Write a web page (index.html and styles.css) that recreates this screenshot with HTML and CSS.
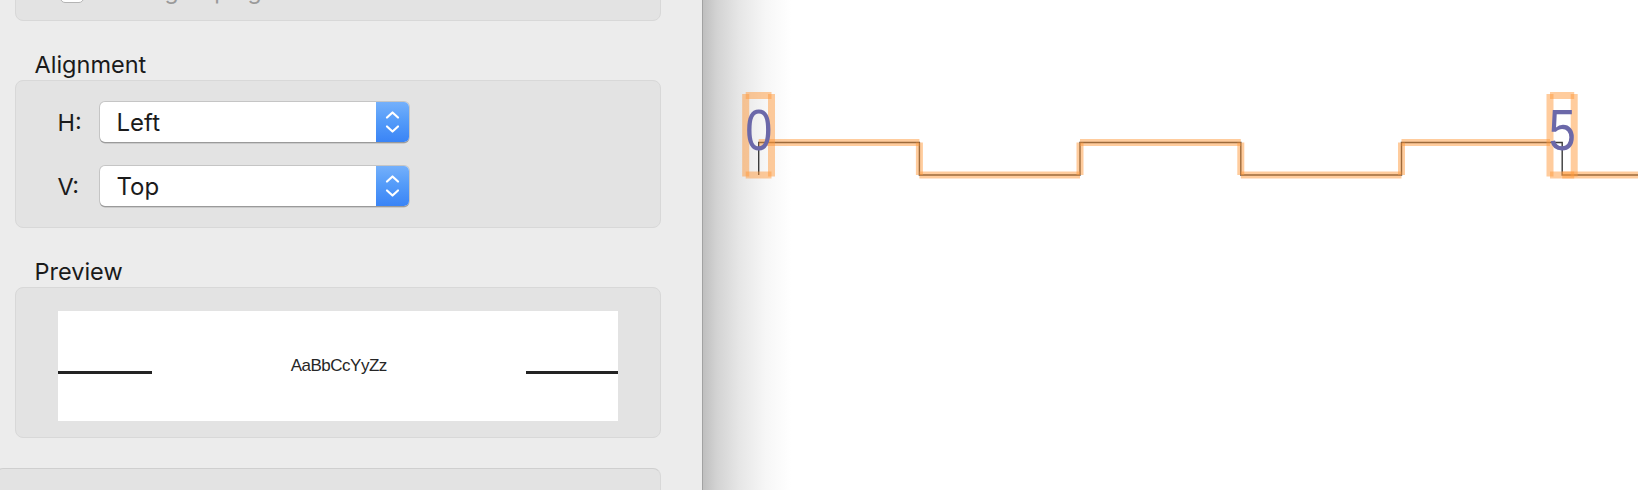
FILE: index.html
```html
<!DOCTYPE html>
<html lang="en">
<head>
<meta charset="utf-8">
<title>Alignment inspector</title>
<link rel="stylesheet" href="styles.css">
</head>
<body>
<div class="app">
  <aside class="panel">
    <section class="group group-top">
      <div class="check-row">
        <span class="checkbox"></span>
        <span class="check-label">Show grouping</span>
      </div>
    </section>

    <h3 class="group-title">Alignment</h3>
    <section class="group group-align">
      <div class="row">
        <span class="row-label">H:</span>
        <div class="popup">
          <span class="popup-text">Left</span>
          <span class="stepper">
            <svg width="33" height="40" viewBox="0 0 33 40"><path d="M11 15.5 L16.5 10.5 L22 15.5 M11 24.5 L16.5 29.5 L22 24.5" fill="none" stroke="#fff" stroke-width="2.2" stroke-linecap="round" stroke-linejoin="round"/></svg>
          </span>
        </div>
      </div>
      <div class="row">
        <span class="row-label">V:</span>
        <div class="popup">
          <span class="popup-text">Top</span>
          <span class="stepper">
            <svg width="33" height="40" viewBox="0 0 33 40"><path d="M11 15.5 L16.5 10.5 L22 15.5 M11 24.5 L16.5 29.5 L22 24.5" fill="none" stroke="#fff" stroke-width="2.2" stroke-linecap="round" stroke-linejoin="round"/></svg>
          </span>
        </div>
      </div>
    </section>

    <h3 class="group-title">Preview</h3>
    <section class="group group-preview">
      <div class="preview">
        <span class="rule rule-left"></span>
        <span class="sample">AaBbCcYyZz</span>
        <span class="rule rule-right"></span>
      </div>
    </section>

    <section class="group group-bottom"></section>
  </aside>

  <main class="canvas">
    <svg class="wave" width="935" height="490" viewBox="703 0 935 490">
      <path class="trace" d="M758.7 175 V142.5 H919.4 V175 H1080 V142.5 H1240.8 V175 H1401.5 V142.5 H1562.2 V175 H1645"/>
      <g class="hl">
        <line x1="758.7" y1="142.5" x2="919.4" y2="142.5"/>
        <line x1="919.4" y1="142.5" x2="919.4" y2="175"/>
        <line x1="919.4" y1="175" x2="1080" y2="175"/>
        <line x1="1080" y1="175" x2="1080" y2="142.5"/>
        <line x1="1080" y1="142.5" x2="1240.8" y2="142.5"/>
        <line x1="1240.8" y1="142.5" x2="1240.8" y2="175"/>
        <line x1="1240.8" y1="175" x2="1401.5" y2="175"/>
        <line x1="1401.5" y1="175" x2="1401.5" y2="142.5"/>
        <line x1="1401.5" y1="142.5" x2="1550" y2="142.5"/>
        <line x1="1562.2" y1="175" x2="1645" y2="175"/>

        <line x1="745.7" y1="95.5" x2="771.5" y2="95.5"/>
        <line x1="745.7" y1="175" x2="771.5" y2="175"/>
        <line x1="745.7" y1="94" x2="745.7" y2="176.5"/>
        <line x1="771.5" y1="94" x2="771.5" y2="176.5"/>

        <line x1="1550" y1="95.5" x2="1574.2" y2="95.5"/>
        <line x1="1550" y1="175" x2="1574.2" y2="175"/>
        <line x1="1550" y1="94" x2="1550" y2="176.5"/>
        <line x1="1574.2" y1="94" x2="1574.2" y2="176.5"/>
      </g>
      <text class="digit" transform="translate(758.7 150) scale(0.84 1)">0</text>
      <text class="digit" transform="translate(1562.2 150) scale(0.84 1)">5</text>
    </svg>
  </main>
</div>
</body>
</html>
```

FILE: styles.css
```css
html, body {
  margin: 0;
  height: 100%;
  overflow: hidden;
}

body {
  font-family: Inter, "Liberation Sans", sans-serif;
  background: #ffffff;
  color: #1b1b1b;
}

.app {
  display: flex;
  width: 1638px;
  height: 490px;
  overflow: hidden;
}

/* ---------- left inspector panel ---------- */
.panel {
  flex: none;
  width: 703px;
  box-sizing: border-box;
  background: #ececec;
  border-right: 1px solid #a2a2a2;
  padding: 0 41px 0 14.5px;
}

.group {
  background: #e3e3e3;
  border: 1px solid #d8d8d8;
  border-radius: 8px;
}

.group-title {
  margin: 29px 0 0 20px;
  font-size: 23.5px;
  line-height: 30px;
  font-weight: 400;
  color: #1a1a1a;
}

.group-top {
  margin-top: -42px;
  padding: 20px 0 17px 44px;
}

.check-row {
  display: flex;
  align-items: center;
  gap: 14px;
  height: 24px;
}

.checkbox {
  width: 24px;
  height: 24px;
  box-sizing: border-box;
  background: #ffffff;
  border: 1px solid #b4b4b4;
  border-radius: 5px;
}

.check-label {
  font-size: 23px;
  color: #9a9a9a;
}

.group-align {
  padding: 21px 0 21px 42px;
}

.row {
  display: flex;
  align-items: center;
  height: 40px;
}

.row + .row {
  margin-top: 24px;
}

.row-label {
  width: 42px;
  font-size: 23.5px;
}

.popup {
  display: flex;
  width: 309px;
  height: 40px;
  box-sizing: border-box;
  background: #ffffff;
  border-radius: 5px;
  box-shadow: 0 0 0 1px rgba(0, 0, 0, 0.13), 0 1.5px 0.5px rgba(0, 0, 0, 0.22);
  overflow: hidden;
}

.popup-text {
  flex: 1;
  display: flex;
  align-items: center;
  padding-left: 17px;
  font-size: 24px;
  color: #1b1b1b;
}

.stepper {
  width: 33px;
  height: 40px;
  background: linear-gradient(to bottom, #74b0fb 0%, #559cf9 45%, #3a84f6 100%);
}

.stepper svg {
  display: block;
}

.group-preview {
  padding: 23px 42px 16px 42px;
}

.preview {
  height: 110px;
  background: #ffffff;
  display: flex;
  align-items: center;
  justify-content: space-between;
}

.rule {
  height: 3px;
  margin-top: 12px;
  background: #232323;
}

.rule-left {
  width: 94px;
}

.rule-right {
  width: 92px;
}

.sample {
  font-family: "Liberation Sans", Arial, sans-serif;
  font-size: 17px;
  letter-spacing: -0.5px;
  color: #262626;
}

.group-bottom {
  margin-top: 30px;
  margin-left: -20px;
  height: 60px;
  border-top-color: #cfcfcf;
}

/* ---------- canvas ---------- */
.canvas {
  flex: 1;
  background: linear-gradient(to right, #bfbfbf 0px, #d3d3d3 14px, #e6e6e6 36px, #f6f6f6 62px, #ffffff 88px);
}

.wave {
  display: block;
}

.trace {
  fill: none;
  stroke: #3a3a3a;
  stroke-width: 1.4;
}

.hl line {
  stroke: #ff9a3c;
  stroke-opacity: 0.5;
  stroke-width: 7;
  stroke-linecap: butt;
}

.digit {
  font-family: "Liberation Sans", Arial, sans-serif;
  font-size: 58px;
  fill: #6b68a9;
  text-anchor: middle;
}
```
